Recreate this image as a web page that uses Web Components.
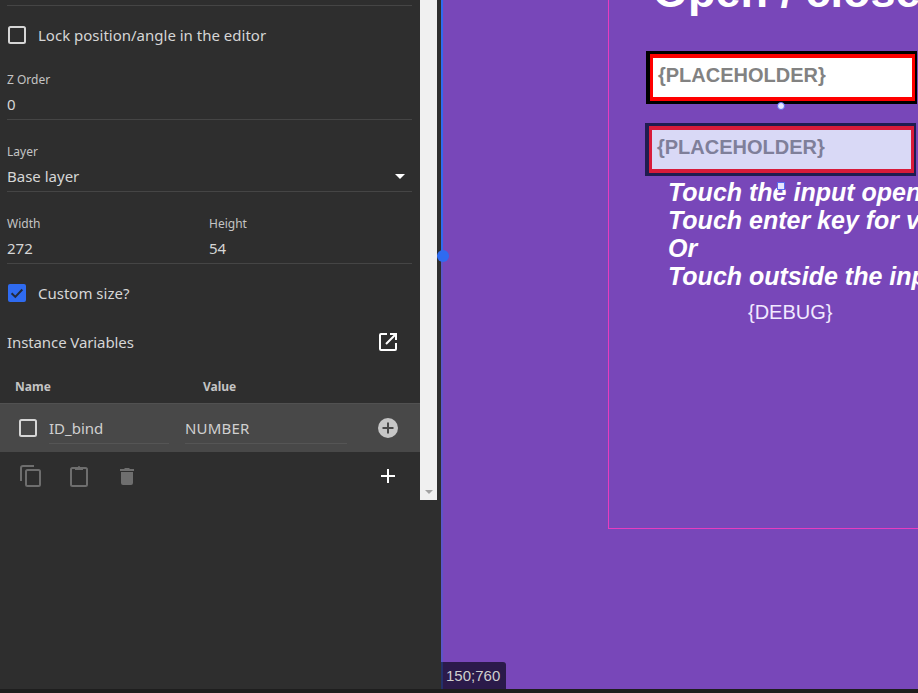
<!DOCTYPE html>
<html>
<head>
<meta charset="utf-8">
<style>
  html, body { margin: 0; height: 100%; background: #1e1e1e; overflow: hidden; }
  body { font-family: "Noto Sans", "Open Sans", sans-serif; }
</style>
</head>
<body>
<editor-app>
  <props-panel slot="panel">
    <prop-check slot="top">Lock position/angle in the editor</prop-check>
    <prop-field slot="top" label="Z Order" value="0"></prop-field>
    <prop-field slot="top" label="Layer" value="Base layer" select></prop-field>
    <size-row slot="top">
      <prop-field slot="w" label="Width" value="272"></prop-field>
      <prop-field slot="h" label="Height" value="54"></prop-field>
    </size-row>
    <prop-check slot="top" checked>Custom size?</prop-check>
    <var-table slot="vars"></var-table>
  </props-panel>
  <scene-stage slot="stage"></scene-stage>
</editor-app>

<script>
// Small helper so each element only has to hand over its markup
class ShadowEl extends HTMLElement {
  constructor() {
    super();
    this.attachShadow({ mode: 'open' });
  }
  connectedCallback() {
    this.shadowRoot.innerHTML = this.render();
  }
}

class EditorApp extends ShadowEl {
  render() {
    return `
      <style>
        :host { display: flex; flex-direction: column; height: 693px; width: 918px; overflow: hidden; }
        .main { display: flex; height: 689px; background: #2e2e2e; position: relative; }
        .bar { height: 4px; background: #1e1e1e; }
        .left { width: 441px; flex: none; }
        .right { flex: 1; min-width: 0; }
        /* drag handle sits over the panel edge */
        .knob { position: absolute; left: 437px; top: 250px; width: 12px; height: 12px; border-radius: 50%; background: #2f6bf0; }
      </style>
      <div class="main">
        <div class="left"><slot name="panel"></slot></div>
        <div class="right"><slot name="stage"></slot></div>
        <div class="knob"></div>
      </div>
      <div class="bar"></div>`;
  }
}

class PropsPanel extends ShadowEl {
  render() {
    return `
      <style>
        :host { display: flex; height: 500px; color: #d6d6d6; }
        .content { width: 420px; flex: none; box-sizing: border-box; }
        .rule { height: 1px; margin: 5px 8px 0 7px; background: #454545; }
        .scroll { width: 17px; flex: none; background: #f0f0f0; display: flex; flex-direction: column; justify-content: flex-end; align-items: center; padding-bottom: 6px; box-sizing: border-box; }
        .arrow { width: 0; height: 0; border-left: 4px solid transparent; border-right: 4px solid transparent; border-top: 4px solid #a3a3a3; }
      </style>
      <div class="content">
        <div class="rule"></div>
        <slot name="top"></slot>
        <slot name="vars"></slot>
      </div>
      <div class="scroll"><div class="arrow"></div></div>`;
  }
}

class PropCheck extends ShadowEl {
  render() {
    const on = this.hasAttribute('checked');
    const box = on
      ? `<svg width="18" height="18" viewBox="0 0 18 18"><rect width="18" height="18" rx="2" fill="#2f6bf0"/><path d="M3.600 9.200l3.700 3.700 7-7.400" fill="none" stroke="#232a3a" stroke-width="2"/></svg>`
      : `<svg width="18" height="18" viewBox="0 0 18 18"><rect x="1" y="1" width="16" height="16" rx="1.500" fill="none" stroke="#d6d6d6" stroke-width="2"/></svg>`;
    return `
      <style>
        :host { display: flex; align-items: center; height: 58px; padding-left: 8px; font-size: 15px; color: #d6d6d6; }
        svg { display: block; margin-right: 12px; }
      </style>
      ${box}<slot></slot>`;
  }
}

class PropField extends ShadowEl {
  render() {
    const label = this.getAttribute('label');
    const value = this.getAttribute('value');
    const caret = this.hasAttribute('select') ? '<span class="caret"></span>' : '';
    return `
      <style>
        :host { display: block; margin: 6px 8px 22px 7px; padding-bottom: 3px; border-bottom: 1px solid #454545; }
        .label { height: 19px; line-height: 19px; font-size: 12px; color: #c4c4c4; }
        .value { margin-top: 3px; height: 24px; line-height: 24px; font-size: 15px; color: #d6d6d6; display: flex; justify-content: space-between; align-items: center; }
        .caret { width: 0; height: 0; margin-right: 7px; border-left: 5px solid transparent; border-right: 5px solid transparent; border-top: 5px solid #fff; }
      </style>
      <div class="label">${label}</div>
      <div class="value"><span>${value}</span>${caret}</div>`;
  }
}

class SizeRow extends ShadowEl {
  render() {
    return `
      <style>
        :host { display: block; }
        .row { display: grid; grid-template-columns: 202px 1fr; margin: 0 8px 0 7px; }
        ::slotted(prop-field) { margin: 0; }
      </style>
      <div class="row"><slot name="w"></slot><slot name="h"></slot></div>`;
  }
}

class VarTable extends ShadowEl {
  render() {
    return `
      <style>
        :host { display: block; color: #d6d6d6; }
        .title { height: 40px; display: flex; align-items: center; justify-content: space-between; padding: 0 23px 0 7px; font-size: 15px; letter-spacing: -0.1px; }
        svg { display: block; }
        .head { margin-top: 7px; height: 34px; display: grid; grid-template-columns: 188px 1fr; align-items: center; padding-left: 15px; font-size: 12px; font-weight: 700; color: #c4c4c4; }
        .row { height: 49px; box-sizing: border-box; border-top: 1px solid #515151; background: #484848; display: flex; align-items: center; padding-left: 19px; font-size: 15px; }
        .row .box { margin-right: 12px; }
        .cell { height: 28px; line-height: 25px; margin-top: 4px; box-sizing: border-box; border-bottom: 1px solid #555; color: #d0d0d0; }
        .name { width: 120px; margin-right: 16px; }
        .val { width: 162px; margin-right: 31px; letter-spacing: 0.2px; }
        .tools { height: 48px; display: flex; align-items: center; padding-left: 20px; }
        .tools svg { margin-right: 28px; }
        .tools .add { margin: 0 25px 0 auto; }
      </style>
      <div class="title">
        <span>Instance Variables</span>
        <svg width="18" height="18" viewBox="0 0 18 18" fill="none" stroke="#fff" stroke-width="2"><path d="M8 1H2a1 1 0 0 0-1 1v14a1 1 0 0 0 1 1h14a1 1 0 0 0 1-1v-6"/><path d="M11 1h6v6M17 1L7 11"/></svg>
      </div>
      <div class="head"><span>Name</span><span>Value</span></div>
      <div class="row">
        <svg class="box" width="18" height="18" viewBox="0 0 18 18"><rect x="1" y="1" width="16" height="16" rx="1.500" fill="none" stroke="#d6d6d6" stroke-width="2"/></svg>
        <div class="cell name">ID_bind</div>
        <div class="cell val">NUMBER</div>
        <svg width="20" height="20" viewBox="0 0 20 20"><circle cx="10" cy="10" r="10" fill="#c6c6c6"/><path d="M10 4.500v11M4.500 10h11" stroke="#484848" stroke-width="2"/></svg>
      </div>
      <div class="tools">
        <svg width="21" height="22" viewBox="0 0 21 22" fill="none" stroke="#6e6e6e" stroke-width="2"><path d="M14 1H3a2 2 0 0 0-2 2v13"/><rect x="6" y="5" width="14" height="16" rx="1.500"/></svg>
        <svg width="18" height="22" viewBox="0 0 18 22" style="margin-left:1px;margin-right:32px"><rect x="1" y="3" width="16" height="18" rx="1.500" fill="none" stroke="#6e6e6e" stroke-width="2"/><path d="M5 2h3a1 1 0 0 1 2 0h3v3H5z" fill="#6e6e6e"/></svg>
        <svg width="14" height="18" viewBox="0 0 14 18" fill="#6e6e6e"><path d="M1 5h12v11a2 2 0 0 1-2 2H3a2 2 0 0 1-2-2zM0 2h4l1-1h4l1 1h4v2H0z"/></svg>
        <svg class="add" width="14" height="14" viewBox="0 0 14 14"><path d="M7 0v14M0 7h14" stroke="#fff" stroke-width="2"/></svg>
      </div>`;
  }
}

class SceneStage extends ShadowEl {
  render() {
    return `
      <style>
        :host { display: block; position: relative; height: 689px; background: #7847b9; overflow: hidden; font-family: "Liberation Sans", Arial, sans-serif; }
        .guide { position: absolute; left: 0; top: 0; bottom: 0; width: 2px; background: linear-gradient(#2f6bf0 256px, #5c55c8 256px, #5c55c8 662px, #23306a 662px); }
        .bounds { position: absolute; left: 167px; top: -20px; width: 400px; height: 549px; box-sizing: border-box; border: 1px solid #e83cc0; }
        .title { position: absolute; left: 212px; top: -33px; font-size: 45px; line-height: 50px; font-weight: 700; color: #fff; white-space: nowrap; }
        .input { position: absolute; box-sizing: border-box; height: 47px; font-size: 20px; font-weight: 700; display: flex; align-items: center; padding-bottom: 5px; border-style: solid; border-width: 4px 3px; }
        .a { top: 54px; left: 209px; width: 265px; background: #fff; border-color: #f00; box-shadow: -1px 0 0 3px #000; color: #828282; padding-left: 5px; }
        .b { top: 126px; left: 208px; width: 265px; background: #d9d9f6; border-color: #d81b3a; box-shadow: -1px 0 0 3px #1f1c50; color: #7f7f9a; padding-left: 5px; }
        .handle { position: absolute; box-sizing: border-box; background: #e6e6ff; border: 1px solid #5a6cf0; }
        .dot { left: 336px; top: 102px; width: 8px; height: 8px; border-radius: 50%; }
        .sq { left: 336px; top: 182px; width: 8px; height: 8px; }
        .text { position: absolute; left: 227px; top: 178px; font-size: 25px; line-height: 28px; font-weight: 700; font-style: italic; color: #fff; white-space: nowrap; }
        .debug { position: absolute; left: 307px; top: 300px; font-size: 20px; line-height: 24px; color: #f1e9ff; }
        .pos { position: absolute; left: 2px; top: 662px; width: 63px; height: 27px; box-sizing: border-box; padding-left: 3px; line-height: 28px; background: #2b1a4a; border-top-right-radius: 3px; color: #cfcfcf; font-size: 15px; }
      </style>
      <div class="bounds"></div>
      <div class="title">Open / close input</div>
      <div class="input a">{PLACEHOLDER}</div>
      <div class="input b">{PLACEHOLDER}</div>
      <div class="text">Touch the input open keyboard<br>Touch enter key for validate<br>Or<br>Touch outside the input</div>
      <div class="handle dot"></div>
      <div class="handle sq"></div>
      <div class="debug">{DEBUG}</div>
      <div class="guide"></div>
      <div class="pos">150;760</div>`;
  }
}

customElements.define('editor-app', EditorApp);
customElements.define('props-panel', PropsPanel);
customElements.define('prop-check', PropCheck);
customElements.define('prop-field', PropField);
customElements.define('size-row', SizeRow);
customElements.define('var-table', VarTable);
customElements.define('scene-stage', SceneStage);
</script>
</body>
</html>
